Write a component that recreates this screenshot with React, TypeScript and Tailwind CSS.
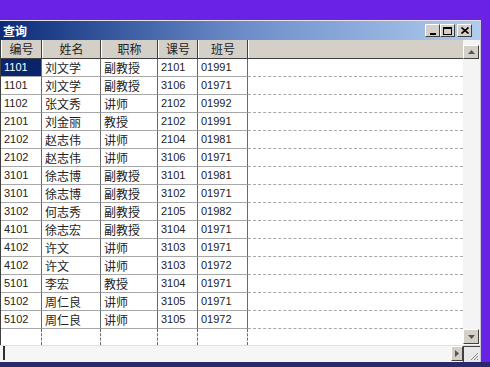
import React from "react";

const rows = [
  ["1101", "刘文学", "副教授", "2101", "01991"],
  ["1101", "刘文学", "副教授", "3106", "01971"],
  ["1102", "张文秀", "讲师", "2102", "01992"],
  ["2101", "刘金丽", "教授", "2102", "01991"],
  ["2102", "赵志伟", "讲师", "2104", "01981"],
  ["2102", "赵志伟", "讲师", "3106", "01971"],
  ["3101", "徐志博", "副教授", "3101", "01981"],
  ["3101", "徐志博", "副教授", "3102", "01971"],
  ["3102", "何志秀", "副教授", "2105", "01982"],
  ["4101", "徐志宏", "副教授", "3104", "01971"],
  ["4102", "许文", "讲师", "3103", "01971"],
  ["4102", "许文", "讲师", "3103", "01972"],
  ["5101", "李宏", "教授", "3104", "01971"],
  ["5102", "周仁良", "讲师", "3105", "01971"],
  ["5102", "周仁良", "讲师", "3105", "01972"],
];

const widths = ["w-[41px]", "w-[59px]", "w-[57px]", "w-[40px]", "w-[50px]"];
const headers = ["编号", "姓名", "职称", "课号", "班号"];
const cjk = { fontFamily: '"Noto Sans CJK SC", "Liberation Sans", sans-serif' };
const num = { fontFamily: '"Liberation Sans", "DejaVu Sans", sans-serif' };

function Btn({ children, className = "" }: { children?: React.ReactNode; className?: string }) {
  return (
    <div
      className={`flex items-center justify-center bg-[#d4d0c8] border border-t-white border-l-white border-r-[#404040] border-b-[#404040] ${className}`}
    >
      {children}
    </div>
  );
}

export default function App() {
  return (
    <div className="w-[490px] h-[367px] bg-[#6a22e4] flex flex-col overflow-hidden">
      <div className="h-[20px] shrink-0" />
      <div className="flex flex-1 min-h-0">
        <div className="w-[481px] bg-[#d4d0c8] flex flex-col border-t border-t-[#e4e4ec] border-r border-r-[#c8c8d8]">
          {/* title bar */}
          <div className="h-[19px] shrink-0 flex items-center justify-between bg-gradient-to-r from-[#0c2a78] via-[#6c8cc8] to-[#b0ccee] pl-[3px] pr-[8px]">
            <span className="text-white text-[12px] font-bold leading-none" style={cjk}>
              查询
            </span>
            <div className="flex items-center">
              <Btn className="w-[15px] h-[13px]">
                <div className="w-[6px] h-[2px] bg-black mt-[6px]" />
              </Btn>
              <Btn className="w-[15px] h-[13px]">
                <div className="w-[9px] h-[8px] border border-black border-t-2" />
              </Btn>
              <Btn className="w-[15px] h-[13px] ml-[2px]">
                <svg width="8" height="7" viewBox="0 0 8 7">
                  <path d="M0.5 0.5 L7.5 6.5 M7.5 0.5 L0.5 6.5" stroke="black" strokeWidth="1.6" />
                </svg>
              </Btn>
            </div>
          </div>
          {/* content */}
          <div className="flex-1 min-h-0 flex flex-col bg-white">
            <div className="flex flex-1 min-h-0">
              <div className="flex-1 flex flex-col border-l border-l-[#404040] overflow-hidden">
                {/* header */}
                <div className="h-[19px] shrink-0 flex bg-[#d4d0c8] border-b border-b-[#404040]">
                  {headers.map((h, i) => (
                    <div
                      key={h}
                      className={`${widths[i]} shrink-0 flex items-center justify-center text-[12px] text-[#222] border-r border-r-[#404040] border-l border-l-white`}
                      style={cjk}
                    >
                      {h}
                    </div>
                  ))}
                  <div className="flex-1 border-l border-l-white" />
                </div>
                {/* body */}
                {rows.map((r, ri) => (
                  <div key={ri} className="h-[18px] shrink-0 flex">
                    {r.map((c, ci) => (
                      <div
                        key={ci}
                        className={`${widths[ci]} shrink-0 flex items-center pl-[3px] border-r border-r-[#6a6a6a] border-b border-b-[#a8a8a8] ${
                          ri === 0 && ci === 0 ? "bg-[#0a246a] text-white" : "text-[#222]"
                        } ${ci === 1 || ci === 2 ? "text-[12px]" : "text-[11px]"}`}
                        style={ci === 1 || ci === 2 ? cjk : num}
                      >
                        {c}
                      </div>
                    ))}
                    <div className="flex-1 border-b border-dashed border-b-[#a8a8a8]" />
                  </div>
                ))}
                <div className="flex-1 flex">
                  {widths.map((w, i) => (
                    <div key={i} className={`${w} shrink-0 border-r border-dashed border-r-[#6a6a6a]`} />
                  ))}
                  <div className="flex-1" />
                </div>
              </div>
              {/* vertical scrollbar */}
              <div className="w-[17px] shrink-0 flex flex-col bg-[#f4f4f4] pt-[5px] pb-[1px]">
                <Btn className="h-[14px] w-[16px]">
                  <svg width="7" height="4" viewBox="0 0 7 4">
                    <path d="M3.5 0 L7 4 L0 4 Z" fill="#555" />
                  </svg>
                </Btn>
                <div className="flex-1" />
                <Btn className="h-[15px] w-[16px]">
                  <svg width="7" height="4" viewBox="0 0 7 4">
                    <path d="M0 0 L7 0 L3.5 4 Z" fill="#555" />
                  </svg>
                </Btn>
              </div>
            </div>
            {/* horizontal scrollbar */}
            <div className="h-[17px] shrink-0 flex bg-[#f6f6f6] border-t border-t-[#e0e0e0]">
              <div className="w-[3px] shrink-0" />
              <div className="w-[2px] h-[14px] bg-[#303030]" />
              <div className="flex-1" />
              <Btn className="w-[12px] h-[15px]">
                <svg width="4" height="7" viewBox="0 0 4 7">
                  <path d="M0 0 L4 3.5 L0 7 Z" fill="#555" />
                </svg>
              </Btn>
              <div className="w-[17px] h-[16px] bg-[#e8e8e8] border-l border-t border-[#404040] relative">
                <svg className="absolute right-[1px] bottom-[1px]" width="10" height="10" viewBox="0 0 10 10">
                  <path d="M9 2 L2 9 M9 5 L5 9 M9 8 L8 9" stroke="#888" strokeWidth="1" />
                </svg>
              </div>
            </div>
          </div>
        </div>
        <div className="flex-1" />
      </div>
      <div className="h-[5px] shrink-0 bg-[#2a2a6a]" />
    </div>
  );
}
